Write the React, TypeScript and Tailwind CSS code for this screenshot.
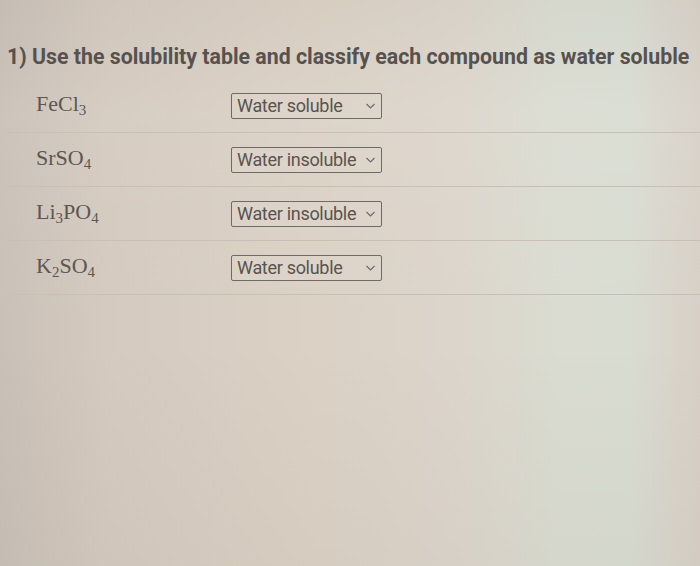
const ROWS = [
  { formula: ["Fe", "Cl", ["3"]], value: "Water soluble" },
  { formula: ["Sr", "SO", ["4"]], value: "Water insoluble" },
  { formula: ["Li", ["3"], "PO", ["4"]], value: "Water insoluble" },
  { formula: ["K", ["2"], "SO", ["4"]], value: "Water soluble" },
] as { formula: (string | string[])[]; value: string }[]

function Formula({ parts }: { parts: (string | string[])[] }) {
  return (
    <span className="font-['Liberation_Serif',serif] text-[22px] text-[#5c5754]">
      {parts.map((p, i) =>
        Array.isArray(p) ? (
          <sub key={i} className="text-[15px] relative top-[4px]">
            {p[0]}
          </sub>
        ) : (
          <span key={i}>{p}</span>
        )
      )}
    </span>
  )
}

function Select({ value }: { value: string }) {
  return (
    <div className="w-[151px] h-[26px] border border-[#6e6a66] rounded-[2px] flex items-center justify-between pl-[5px] pr-[5px] bg-[#e0d8ce]/40">
      <span className="text-[18px] text-[#585451] leading-none tracking-[-0.3px]">{value}</span>
      <svg width="11" height="8" viewBox="0 0 11 8" fill="none">
        <path d="M1.5 2l4 4 4-4" stroke="#6a6a78" strokeWidth="1.2" />
      </svg>
    </div>
  )
}

export default function App() {
  return (
    <main className="w-[700px] h-[566px] overflow-hidden font-['Roboto',sans-serif] bg-[linear-gradient(90deg,#c9c0b7_0%,#d4cabf_15%,#dbd1c5_45%,#dcd5cb_65%,#dadcd1_80%,#d9dcd1_90%,#d8d0c7_100%)]">
      <div className="h-full bg-[linear-gradient(180deg,rgba(0,0,0,0.02)_0%,rgba(255,255,255,0.06)_20%,rgba(0,0,0,0)_60%,rgba(60,50,40,0.03)_100%)] pt-[44px]">
        <h1 className="pl-[7px] whitespace-nowrap text-[21.3px] font-bold text-[#57524f] leading-[26px]">
          1) Use the solubility table and classify each compound as water soluble
        </h1>
        <div className="mt-[9px] ml-[7px]">
          {ROWS.map((r, i) => (
            <div key={i} className="h-[54px] flex items-center border-b border-[#c9c0b5]">
              <div className="w-[224px] pl-[29px] -mt-[4px]">
                <Formula parts={r.formula} />
              </div>
              <Select value={r.value} />
            </div>
          ))}
        </div>
      </div>
    </main>
  )
}
